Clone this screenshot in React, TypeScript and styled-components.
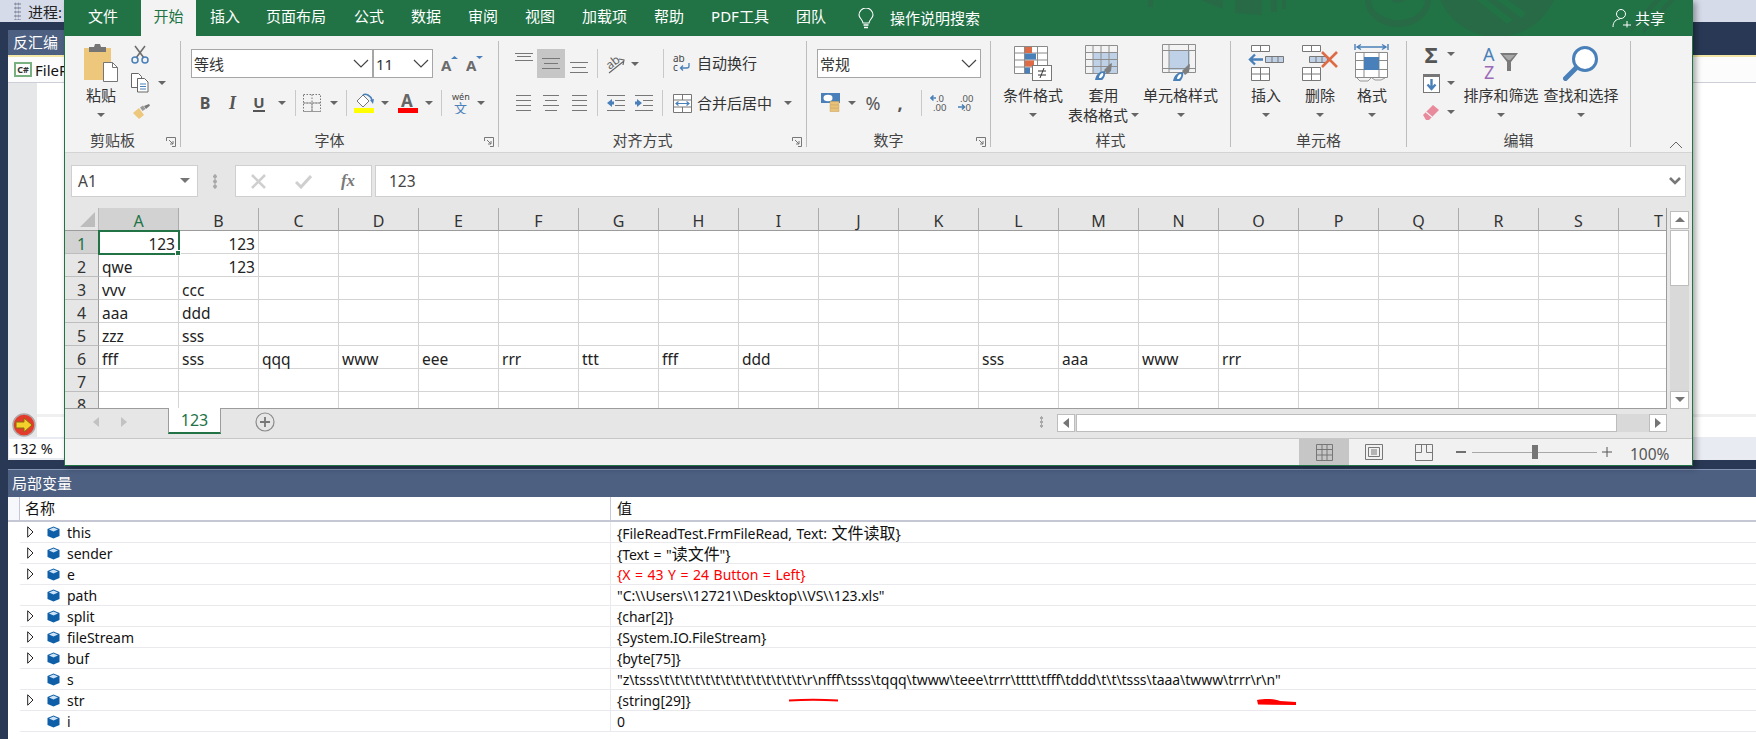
import React from "react";
import styled, { createGlobalStyle } from "styled-components";

const GlobalStyle = createGlobalStyle`
  html, body {
    margin: 0;
    padding: 0;
    background: #293955;
    font-family: "Noto Sans", "Noto Sans CJK SC", sans-serif;
  }
  * { box-sizing: border-box; }
`;

const CJK = `"Noto Sans", "Noto Sans CJK SC", sans-serif`;

const Page = styled.div`
  position: relative;
  width: 1756px;
  height: 739px;
  overflow: hidden;
  display: flex;
  flex-direction: column;
  background: #293955;
`;

/* ---------- visual studio behind ---------- */
const TopBar = styled.div`
  height: 22px;
  background: #d6dbe9;
  display: flex;
  align-items: center;
  padding-left: 14px;
  font-size: 15px;
  color: #222;
`;
const Grip = styled.div`
  width: 7px;
  height: 18px;
  margin-right: 7px;
  background-image: radial-gradient(#8a93a8 1px, transparent 1.2px);
  background-size: 3px 4px;
`;
const Workspace = styled.div`
  height: 438px;
  padding: 8px 0 0 8px;
  display: flex;
  flex-direction: column;
`;
const DocTab = styled.div`
  width: 56px;
  height: 25px;
  background: #4d6082;
  color: #fff;
  font-size: 15px;
  line-height: 25px;
  padding-left: 5px;
`;
const AccentLine = styled.div`
  height: 2px;
  background: #f3e6a6;
`;
const DocToolbar = styled.div`
  height: 26px;
  background: #fcfcfc;
  border-bottom: 1px solid #ccced8;
  display: flex;
  align-items: center;
  padding-left: 6px;
  gap: 3px;
  font-size: 15px;
  color: #111;
`;
const CsBadge = styled.div`
  width: 18px;
  height: 15px;
  border: 2px solid #79b07f;
  font-size: 9px;
  font-weight: 700;
  line-height: 11px;
  text-align: center;
  color: #333;
`;
const DocBody = styled.div`
  flex: 1;
  display: flex;
  min-height: 0;
`;
const Gutter = styled.div`
  width: 29px;
  background: #e6e7e8;
  display: flex;
  align-items: flex-end;
  justify-content: center;
  padding: 0 0 0 3px;
`;
const Editor = styled.div`
  flex: 1;
  display: flex;
  flex-direction: column;
  background: #fff;
`;
const EditorScroll = styled.div`
  height: 3px;
  margin-top: auto;
  margin-bottom: 20px;
  background: #f0f0f0;
`;
const DocStatus = styled.div`
  height: 23px;
  background: #e9ebf2;
  padding: 2px 0 2px 1px;
`;
const ZoomBox = styled.div`
  width: 60px;
  height: 19px;
  background: #fff;
  font-size: 14.5px;
  line-height: 19px;
  padding-left: 3px;
  color: #111;
`;

const Locals = styled.div`
  margin: 9px 0 0 8px;
  flex: 1;
  background: #fff;
  display: flex;
  flex-direction: column;
`;
const LocalsTitle = styled.div`
  height: 28px;
  background: #4d6082;
  border-top: 1px solid #8595b3;
  color: #fff;
  font-size: 15px;
  line-height: 27px;
  padding-left: 4px;
`;
const LocalsHead = styled.div`
  height: 25px;
  display: flex;
  border-bottom: 2px solid #c6c7d4;
  font-size: 15px;
  line-height: 23px;
  color: #111;
`;
const HeadGutter = styled.div`
  width: 12px;
  border-right: 1px solid #c6c7d4;
  background: #f7f8fb;
`;
const NameCol = styled.div`
  width: 591px;
  padding-left: 5px;
  border-right: 1px solid #c6c7d4;
`;
const ValueHead = styled.div`
  padding-left: 6px;
`;
const LocalRow = styled.div`
  height: 21px;
  margin-left: 12px;
  display: flex;
  border-bottom: 1px solid #e9e9ee;
  font-size: 14px;
  line-height: 22px;
  color: #111;
`;
const NameCell = styled.div`
  width: 591px;
  display: flex;
  align-items: center;
  padding-left: 7px;
  border-right: 1px solid #e9e9ee;
`;
const NameText = styled.span`
  padding-top: 2px;
`;
const ExpanderSlot = styled.div`
  width: 13px;
  display: flex;
  align-items: center;
`;
const CubeSlot = styled.div`
  width: 27px;
  padding-left: 7px;
  display: flex;
  align-items: center;
`;
const ValueCell = styled.div<{ $err?: boolean }>`
  padding-left: 6px;
  white-space: pre;
  letter-spacing: -0.05px;
  word-spacing: 1px;
  color: ${(p) => (p.$err ? "#ff0000" : "#111")};
`;
const WideRun = styled.span`
  font-size: 16px;
`;
const RedMarks = styled.svg`
  position: absolute;
  left: 780px;
  top: 692px;
`;

/* ---------- excel window ---------- */
const ExcelWindow = styled.div`
  position: absolute;
  left: 64px;
  top: 0;
  width: 1629px;
  height: 466px;
  border: 1px solid #217346;
  border-top: 0;
  background: #f3f3f3;
  box-shadow: 3px 2px 6px rgba(0, 0, 0, 0.35);
  display: flex;
  flex-direction: column;
`;
const TitleBar = styled.div`
  position: relative;
  height: 36px;
  background: #217346;
  display: flex;
  overflow: hidden;
  color: #fff;
  font-size: 15px;
  line-height: 33px;
`;
const Decor = styled.svg`
  position: absolute;
  left: 0;
  top: 0;
`;
const MenuTab = styled.div<{ $w: number; $on?: boolean }>`
  position: relative;
  width: ${(p) => p.$w}px;
  flex: none;
  text-align: center;
  white-space: nowrap;
  background: ${(p) => (p.$on ? "#f3f3f3" : "transparent")};
  color: ${(p) => (p.$on ? "#217346" : "#fff")};
`;
const TellMe = styled.div`
  position: relative;
  display: flex;
  align-items: center;
  gap: 16px;
  margin-left: 21px;
  width: 130px;
  white-space: nowrap;
`;
const ShareBox = styled.div`
  position: relative;
  margin-left: auto;
  margin-right: 27px;
  display: flex;
  align-items: center;
  gap: 4px;
`;
const Ribbon = styled.div`
  height: 117px;
  padding-top: 5px;
  display: flex;
  position: relative;
  border-bottom: 1px solid #d4d4d4;
  background: #f3f3f3;
`;
const Group = styled.div<{ $w: number }>`
  position: relative;
  flex: none;
  width: ${(p) => p.$w}px;
  height: 106px;
  border-right: 1px solid #bdbdbd;
  display: flex;
  flex-direction: column;
`;
const GroupBody = styled.div<{ $pad?: number }>`
  height: 89px;
  display: flex;
  padding-left: ${(p) => p.$pad ?? 0}px;
`;
const GroupLabel = styled.div<{ $launcher?: boolean }>`
  height: 17px;
  line-height: 20px;
  font-size: 15px;
  color: #444;
  text-align: center;
  padding-right: ${(p) => (p.$launcher ? 20 : 0)}px;
`;
const Launcher = styled.svg`
  position: absolute;
  right: 4px;
  bottom: 0;
`;
const BigButton = styled.div<{ $w: number }>`
  flex: none;
  width: ${(p) => p.$w}px;
  display: flex;
  flex-direction: column;
  align-items: center;
  font-size: 15px;
  line-height: 20px;
  color: #333;
`;
const BigIcon = styled.div`
  height: 44px;
  display: flex;
  align-items: center;
  justify-content: center;
`;
const BigLine = styled.div`
  height: 20px;
  display: flex;
  align-items: center;
  gap: 3px;
  white-space: nowrap;
`;
const SmallCol = styled.div<{ $pad?: number }>`
  flex: none;
  display: flex;
  flex-direction: column;
  gap: 3px;
  padding-left: ${(p) => p.$pad ?? 0}px;
`;
const SmallRow = styled.div`
  height: 26px;
  display: flex;
  align-items: center;
`;
const Stack = styled.div`
  flex: none;
  display: flex;
  flex-direction: column;
  gap: 12px;
  padding-top: 8px;
`;
const ToolRow = styled.div<{ $h: number }>`
  height: ${(p) => p.$h}px;
  display: flex;
  align-items: stretch;
`;
const Slot = styled.div<{ $w: number; $on?: boolean; $pt?: number; $pb?: number }>`
  flex: none;
  width: ${(p) => p.$w}px;
  display: flex;
  align-items: center;
  justify-content: center;
  padding-top: ${(p) => p.$pt ?? 0}px;
  padding-bottom: ${(p) => p.$pb ?? 0}px;
  background: ${(p) => (p.$on ? "#c6c6c6" : "transparent")};
`;
const VLine = styled.div`
  width: 1px;
  height: 100%;
  background: #c9c9c9;
`;
const Caret = styled.div`
  width: 0;
  height: 0;
  border-left: 4px solid transparent;
  border-right: 4px solid transparent;
  border-top: 4px solid #666;
`;
const Combo = styled.div<{ $w: number }>`
  flex: none;
  width: ${(p) => p.$w}px;
  height: 29px;
  background: #fff;
  border: 1px solid #a6a6a6;
  display: flex;
  align-items: center;
  justify-content: space-between;
  padding: 0 3px 0 2px;
  font-size: 15px;
  color: #333;
`;
const ToolText = styled.span<{ $bold?: boolean; $italic?: boolean; $size?: number; $line?: boolean }>`
  font-family: ${(p) => (p.$italic ? `"Liberation Serif", serif` : CJK)};
  font-weight: ${(p) => (p.$bold ? 700 : 400)};
  font-style: ${(p) => (p.$italic ? "italic" : "normal")};
  font-size: ${(p) => p.$size ?? 15}px;
  color: #555;
  line-height: 1;
  border-bottom: ${(p) => (p.$line ? "2px solid #555" : "0")};
`;
const RibbonText = styled.span<{ $lh: number }>`
  font-size: 15px;
  line-height: ${(p) => p.$lh}px;
  color: #333;
  white-space: nowrap;
`;
const Collapse = styled.svg`
  position: absolute;
  left: 1604px;
  top: 104px;
`;

const FormulaBar = styled.div`
  height: 55px;
  background: #e6e6e6;
  padding: 12px 6px 0 6px;
  display: flex;
  flex: none;
`;
const FieldBox = styled.div<{ $w?: number }>`
  height: 32px;
  background: #fff;
  border: 1px solid #cfcfcf;
  display: flex;
  align-items: center;
  font-size: 15.5px;
  color: #444;
  ${(p) => (p.$w ? `width: ${p.$w}px; flex: none;` : "flex: 1; margin-left: 3px;")}
`;
const NameValue = styled.span`
  flex: 1;
  padding-left: 6px;
`;
const Dots = styled.div`
  width: 37px;
  height: 32px;
  flex: none;
  display: flex;
  align-items: center;
  justify-content: center;
  padding-right: 3px;
`;
const DotsInner = styled.div`
  width: 4px;
  height: 15px;
  background-image: radial-gradient(#a9a9a9 1.6px, transparent 1.8px);
  background-size: 4px 5px;
`;
const FormulaText = styled.span`
  flex: 1;
  padding-left: 13px;
`;
const FxSlot = styled.div<{ $w: number }>`
  width: ${(p) => p.$w}px;
  display: flex;
  justify-content: center;
  align-items: center;
`;
const Fx = styled.span`
  font-family: "Liberation Serif", serif;
  font-style: italic;
  font-weight: 700;
  font-size: 17px;
  color: #7a7a7a;
`;

const MainArea = styled.div`
  flex: 1;
  display: flex;
  background: #e6e6e6;
  min-height: 0;
`;
const SheetArea = styled.div`
  width: 1602px;
  flex: none;
  display: flex;
  flex-direction: column;
`;
const GridFrame = styled.div`
  height: 201px;
  overflow: hidden;
  flex: none;
  border-right: 1px solid #9c9c9c;
  border-bottom: 1px solid #9c9c9c;
`;
const HeaderRow = styled.div`
  height: 23px;
  display: flex;
  background: #e6e6e6;
  border-bottom: 1px solid #9c9c9c;
`;
const Corner = styled.div`
  width: 34px;
  flex: none;
  border-right: 1px solid #b8b8b8;
  display: flex;
  align-items: flex-end;
  justify-content: flex-end;
  padding: 0 3px 3px 0;
`;
const ColHead = styled.div<{ $on?: boolean }>`
  width: 80px;
  flex: none;
  text-align: center;
  font-size: 16px;
  padding-top: 3px;
  line-height: 20px;
  color: ${(p) => (p.$on ? "#217346" : "#333")};
  background: ${(p) => (p.$on ? "#d2d2d2" : "transparent")};
  border-right: 1px solid #ababab;
`;
const SheetRow = styled.div`
  height: 23px;
  display: flex;
  background: #fff;
`;
const RowHead = styled.div<{ $on?: boolean }>`
  width: 34px;
  flex: none;
  text-align: center;
  font-size: 16px;
  padding-top: 3px;
  line-height: 20px;
  color: ${(p) => (p.$on ? "#217346" : "#333")};
  background: ${(p) => (p.$on ? "#d2d2d2" : "#e6e6e6")};
  border-right: 1px solid #9c9c9c;
  border-bottom: 1px solid #bdbdbd;
`;
const Cell = styled.div<{ $right?: boolean; $sel?: boolean }>`
  position: relative;
  width: 80px;
  flex: none;
  padding: 3px 3px 0;
  font-size: 15.5px;
  line-height: 20px;
  color: #222;
  white-space: nowrap;
  text-align: ${(p) => (p.$right ? "right" : "left")};
  border-right: 1px solid #d4d4d4;
  border-bottom: 1px solid #d4d4d4;
  ${(p) => p.$sel && "outline: 2px solid #217346; outline-offset: -1px; z-index: 1;"}
`;
const FillHandle = styled.div`
  position: absolute;
  right: -3px;
  bottom: -3px;
  width: 6px;
  height: 6px;
  background: #217346;
  border: 1px solid #fff;
`;
const VScroll = styled.div`
  width: 24px;
  height: 201px;
  padding: 3px 0 0 3px;
  display: flex;
  flex-direction: column;
`;
const ScrollBtn = styled.div<{ $w?: number }>`
  width: ${(p) => p.$w ?? 19}px;
  height: 18px;
  flex: none;
  background: #fff;
  border: 1px solid #bdbdbd;
  display: flex;
  align-items: center;
  justify-content: center;
`;
const VThumb = styled.div`
  width: 19px;
  height: 56px;
  margin-top: 1px;
  flex: none;
  background: #fff;
  border: 1px solid #bdbdbd;
`;
const VTrack = styled.div`
  width: 19px;
  flex: 1;
  background: #d9d9d9;
`;
const SheetBar = styled.div`
  height: 29px;
  flex: none;
  display: flex;
  align-items: flex-start;
`;
const NavArrows = styled.div`
  width: 103px;
  height: 25px;
  flex: none;
  display: flex;
  align-items: center;
  gap: 18px;
  padding-left: 26px;
`;
const SheetTab = styled.div`
  width: 53px;
  height: 26px;
  margin-top: -1px;
  background: #fff;
  border-left: 1px solid #9c9c9c;
  border-right: 1px solid #9c9c9c;
  border-bottom: 2px solid #217346;
  flex: none;
  text-align: center;
  font-size: 16px;
  line-height: 25px;
  color: #217346;
`;
const AddSheet = styled.div`
  width: 88px;
  height: 25px;
  flex: none;
  display: flex;
  align-items: center;
  justify-content: center;
`;
const HGrip = styled.div`
  width: 748px;
  height: 25px;
  flex: none;
  display: flex;
  align-items: center;
  justify-content: flex-end;
  padding-right: 14px;
`;
const HDots = styled.div`
  width: 3px;
  height: 12px;
  background-image: radial-gradient(#a9a9a9 1.2px, transparent 1.4px);
  background-size: 3px 4px;
`;
const HScroll = styled.div`
  flex: 1;
  display: flex;
  height: 18px;
  margin-top: 5px;
  background: #d9d9d9;
`;
const HThumb = styled.div`
  width: 541px;
  height: 18px;
  margin-left: 1px;
  background: #fff;
  border: 1px solid #bdbdbd;
  flex: none;
`;
const HSpace = styled.div`
  flex: 1;
`;
const StatusBar = styled.div`
  height: 27px;
  flex: none;
  background: #f1f1f1;
  border-top: 1px solid #c8c8c8;
  display: flex;
  align-items: stretch;
  justify-content: flex-end;
  padding-right: 22px;
`;
const ViewBtn = styled.div<{ $on?: boolean }>`
  width: 50px;
  flex: none;
  display: flex;
  align-items: center;
  justify-content: center;
  background: ${(p) => (p.$on ? "#c6c6c6" : "transparent")};
`;
const ZoomCtrl = styled.div`
  width: 181px;
  flex: none;
  display: flex;
  align-items: center;
  padding-left: 7px;
`;
const SliderTrack = styled.div`
  position: relative;
  width: 125px;
  height: 1px;
  margin: 0 5px 0 6px;
  background: #a8a8a8;
`;
const SliderThumb = styled.div`
  position: absolute;
  left: 60px;
  top: -7px;
  width: 6px;
  height: 14px;
  background: #757575;
`;
const ZoomPct = styled.div`
  font-size: 15.5px;
  line-height: 30px;
  color: #555;
  width: 40px;
`;

/* ---------- icons ---------- */
const BLUE = "#4a80b9";
const ORANGE = "#df6a46";

const Chevron = () => (
  <svg width="16" height="10" viewBox="0 0 16 10">
    <path d="M1 1l7 7 7-7" fill="none" stroke="#444" strokeWidth="1.2" />
  </svg>
);
const PasteIcon = () => (
  <svg width="36" height="40" viewBox="0 0 36 40">
    <rect x="1" y="5" width="27" height="32" fill="#edc77c" />
    <path d="M6 9V4h5l1-3h5l1 3h5v5z" fill="#757575" />
    <path d="M20.5 19.5h9l5 5v14h-14z" fill="#fff" stroke="#757575" />
    <path d="M29.5 19.5v5h5" fill="none" stroke="#757575" />
  </svg>
);
const ScissorsIcon = () => (
  <svg width="18" height="19" viewBox="0 0 18 19">
    <path d="M4 1l9 12M14 1L5 13" stroke="#6e6e6e" strokeWidth="1.6" fill="none" />
    <circle cx="4" cy="15" r="3" fill="none" stroke={BLUE} strokeWidth="1.5" />
    <circle cx="14" cy="15" r="3" fill="none" stroke={BLUE} strokeWidth="1.5" />
  </svg>
);
const CopyIcon = () => (
  <svg width="18" height="20" viewBox="0 0 18 20">
    <path d="M.5.5h7l3 3v11H.5z" fill="#fff" stroke="#666" />
    <path d="M6.5 5.5h7l3.5 3.5v10H6.5z" fill="#fff" stroke="#666" />
    <path d="M9 11h6M9 13.5h6M9 16h6" stroke={BLUE} />
  </svg>
);
const PainterIcon = () => (
  <svg width="19" height="16" viewBox="0 0 19 16">
    <path d="M1 9l6-5 5 7-5 4z" fill="#edc77c" />
    <path d="M8 3.5l3-2 2.5 3.5-3 2z" fill="#9a9a9a" />
    <path d="M12 2l5-2 1 1.500-4 3.500z" fill="#777" />
  </svg>
);
const GrowA = ({ down }: { down?: boolean }) => (
  <svg width="18" height="18" viewBox="0 0 18 18">
    <text x="0" y="16" fontSize="15" fontWeight="700" fill="#6a6a6a" fontFamily="Noto Sans">A</text>
    <path d={down ? "M10 1h7l-3.500 3z" : "M10 4l3.500-3L17 4z"} fill={BLUE} />
  </svg>
);
const BorderIcon = () => (
  <svg width="18" height="18" viewBox="0 0 18 18">
    <path d="M.5.5h17v17H.5zM9 .5v17M.5 9h17" fill="none" stroke="#777" strokeDasharray="1.500 1.500" />
    <path d="M.5 17.500h17M9 9v8M.5 9h17" stroke="#999" fill="none" />
  </svg>
);
const FillColorIcon = () => (
  <svg width="21" height="20" viewBox="0 0 21 20">
    <path d="M3 8l6-6 6 6-6 6z" fill="#fff" stroke="#777" />
    <path d="M9 2c3-2 8 1 9 5" fill="none" stroke={BLUE} strokeWidth="1.600" />
    <path d="M16 7l3 4 1-5z" fill={BLUE} />
    <rect x="0" y="15" width="20" height="5" fill="#ffff00" />
  </svg>
);
const FontColorIcon = () => (
  <svg width="21" height="20" viewBox="0 0 21 20">
    <text x="3" y="14" fontSize="17" fontWeight="700" fill="#666" fontFamily="Noto Sans">A</text>
    <rect x="0" y="15" width="20" height="5" fill="#ff0000" />
  </svg>
);
const WenIcon = () => (
  <svg width="22" height="22" viewBox="0 0 22 22">
    <text x="1" y="8" fontSize="9" fill="#444" fontFamily="Noto Sans">wén</text>
    <text x="3" y="21" fontSize="13" fill={BLUE} fontFamily="Noto Sans CJK SC">文</text>
  </svg>
);
const Lines = ({ w, rows }: { w: number; rows: [number, number][] }) => (
  <svg width={w} height={rows[rows.length - 1][0] + 1} viewBox={`0 0 ${w} ${rows[rows.length - 1][0] + 1}`}>
    {rows.map(([y, x], i) => (
      <path key={i} d={`M${x} ${y + 0.5}H${w - x}`} stroke="#777" />
    ))}
  </svg>
);
const OrientIcon = () => (
  <svg width="20" height="20" viewBox="0 0 20 20">
    <g transform="rotate(-38 8 10)">
      <text x="1" y="12" fontSize="12" fill="#666" fontFamily="Noto Sans">ab</text>
    </g>
    <path d="M3 19L18 7M13 5l5 1-1 5" fill="none" stroke="#666" strokeWidth="1.200" />
  </svg>
);
const WrapIcon = () => (
  <svg width="18" height="17" viewBox="0 0 18 17">
    <text x="0" y="7" fontSize="10" fill="#444" fontFamily="Noto Sans">ab</text>
    <text x="0" y="16" fontSize="10" fill="#444" fontFamily="Noto Sans">c</text>
    <path d="M16 8v3a2 2 0 0 1-2 2H8M10 10.500L7.500 13l2.500 2.500" fill="none" stroke={BLUE} strokeWidth="1.300" />
  </svg>
);
const IndentIcon = ({ rev }: { rev?: boolean }) => (
  <svg width="18" height="16" viewBox="0 0 18 16">
    <path d="M0 .5h18M8 5.500h10M8 10.500h10M0 15.500h18" stroke="#777" />
    <path d={rev ? "M0 8l5-4v2.500h2v3H5V12z" : "M7 8L2 4v2.500H0v3h2V12z"} fill={BLUE} />
  </svg>
);
const MergeIcon = () => (
  <svg width="19" height="19" viewBox="0 0 19 19">
    <path d="M.5.5h18v18H.5zM.5 6h18M.5 13h18M9.500.5V6M9.500 13v5.500" fill="#fff" stroke="#777" />
    <path d="M3 9.500h13M5.500 7.500l-2.500 2 2.500 2M13.500 7.500l2.500 2-2.500 2" fill="none" stroke={BLUE} strokeWidth="1.200" />
  </svg>
);
const CurrencyIcon = () => (
  <svg width="20" height="20" viewBox="0 0 20 20">
    <rect x="0" y="0" width="19" height="10" fill={BLUE} />
    <ellipse cx="7" cy="5" rx="4.500" ry="3.200" fill="#fff" />
    <path d="M9 8.500h9v3H9zM9 12h9v3H9zM9 15.500h9v3H9z" fill="#e9c27a" stroke="#c9a050" strokeWidth=".5" />
  </svg>
);
const DecimalIcon = ({ more }: { more?: boolean }) => (
  <svg width="18" height="19" viewBox="0 0 18 19">
    <text x={more ? 6 : 3} y="8" fontSize="9.500" fill="#555" fontFamily="Noto Sans">{more ? ".0" : ".00"}</text>
    <text x={more ? 3 : 6} y="17" fontSize="9.500" fill="#555" fontFamily="Noto Sans">{more ? ".00" : ".0"}</text>
    <path d={more ? "M6 4H1.500M3.500 1.500L1 4l2.500 2.500" : "M7 13H1M5 10.500L7.500 13 5 15.500"} fill="none" stroke={BLUE} strokeWidth="1.600" />
  </svg>
);
const Brush = ({ x, y }: { x: number; y: number }) => (
  <g transform={`translate(${x} ${y})`}>
    <path d="M0 17c1-6 5-9 10-9 1 3-1 8-3 9z" fill={BLUE} />
    <path d="M4 15c0-3 2-5 4-5 1 2-1 4-2 5z" fill="#fff" />
    <path d="M9 7l6-6 2-1-1 8-4 3z" fill="#7f7f7f" />
  </g>
);
const CondFormatIcon = () => (
  <svg width="38" height="35" viewBox="0 0 38 35">
    <path d="M.5.500h33v27H.5zM10.500.500v27M23.500.500v27M.5 7h33M.5 14h33M.5 21h33" fill="#fff" stroke="#8a8a8a" />
    <rect x="11" y="1" width="7" height="6" fill={ORANGE} />
    <rect x="11" y="7.500" width="11" height="6" fill={BLUE} />
    <rect x="11" y="14.500" width="9" height="6" fill={ORANGE} />
    <rect x="11" y="21.500" width="5" height="6" fill={BLUE} />
    <rect x="18.500" y="19.500" width="19" height="15" fill="#fff" stroke="#777" />
    <path d="M24 25h8M24 29h8M30 22l-4 10" stroke="#333" fill="none" />
  </svg>
);
const TableStyleIcon = () => (
  <svg width="38" height="36" viewBox="0 0 38 36">
    <rect x="8" y="8" width="24" height="21" fill="#bfd1e6" />
    <path d="M.5.500h32v28H.5zM.5 7.500h32M.5 14.500h32M.5 21.500h32M8 .5v28M16 .5v28M24 .5v28" fill="none" stroke="#8e8e8e" />
    <Brush x={10} y={18} />
  </svg>
);
const CellStyleIcon = () => (
  <svg width="38" height="38" viewBox="0 0 38 38">
    <rect x="7" y="6" width="21" height="20" fill="#bfd1e6" />
    <path d="M.5.500h33v28H.5zM.5 6.500h33M.5 24.500h33M7 .5v28M26.500.5v28" fill="none" stroke="#8e8e8e" />
    <Brush x={11} y={20} />
  </svg>
);
const InsertIcon = () => (
  <svg width="36" height="36" viewBox="0 0 36 36">
    <path d="M3.500.5h18v6h-18zM12.500.5v6M3.500 22.500h18v13h-18zM3.500 29h18M12.500 22.500v13" fill="#fff" stroke="#777" />
    <path d="M17.500 11.500h18v6h-18zM24 11.500v6M30 11.500v6" fill="#bfd1e6" stroke="#777" />
    <path d="M15 14.500H2M7 9.500l-5 5 5 5" fill="none" stroke={BLUE} strokeWidth="2.400" />
  </svg>
);
const DeleteIcon = () => (
  <svg width="36" height="36" viewBox="0 0 36 36">
    <path d="M.5.5h18v6H.5zM9.500.5v6M.5 22.500h18v13H.5zM.5 29h18M9.500 22.500v13" fill="#fff" stroke="#777" />
    <path d="M7.500 11.500h18v6h-18zM14 11.500v6M20 11.500v6" fill="#bfd1e6" stroke="#777" />
    <path d="M20 7l15 15M35 7L20 22" fill="none" stroke={ORANGE} strokeWidth="2.600" />
  </svg>
);
const FormatIcon = () => (
  <svg width="36" height="40" viewBox="0 0 36 40">
    <path d="M1 1v6M34 1v6M3 4h29M7 1.500L3 4l4 2.500M28 1.500L32 4l-4 2.500" fill="none" stroke={BLUE} strokeWidth="1.400" />
    <path d="M1.500 9.500h32v25H1.500zM1.500 17.500h32M1.500 26.500h32M10 9.500v25M25 9.500v25" fill="#fff" stroke="#8a8a8a" />
    <rect x="10" y="14" width="15" height="13" fill={BLUE} />
    <path d="M3 35l3 3h8l3-3M18 35l3 2h6l4-2" fill="none" stroke="#999" />
  </svg>
);
const FillDownIcon = () => (
  <svg width="17" height="19" viewBox="0 0 17 19">
    <rect x=".5" y=".5" width="16" height="18" fill="#fff" stroke="#777" />
    <rect x="0" y="0" width="17" height="3" fill="#777" />
    <path d="M8.500 5v10M4.500 10.500l4 4.500 4-4.500" fill="none" stroke={BLUE} strokeWidth="2.400" />
  </svg>
);
const EraserIcon = () => (
  <svg width="18" height="16" viewBox="0 0 18 16">
    <path d="M1 11l10-10 6 5-10 10H4z" fill="#e98a9c" />
    <path d="M4 8l6 5" stroke="#f3f3f3" strokeWidth="1.200" />
  </svg>
);
const SortIcon = () => (
  <svg width="36" height="36" viewBox="0 0 36 36">
    <text x="0" y="16" fontSize="18" fontWeight="400" fill={BLUE} fontFamily="Noto Sans">A</text>
    <text x="1" y="34" fontSize="18" fontWeight="400" fill="#9b6bb8" fontFamily="Noto Sans">Z</text>
    <path d="M17 8h18l-7 9v9h-4v-9z" fill="#7a7a7a" />
    <path d="M20 10h12l-5 5h-2z" fill="#a8a8a8" />
  </svg>
);
const FindIcon = () => (
  <svg width="36" height="36" viewBox="0 0 36 36">
    <circle cx="22" cy="14" r="11.500" fill="#fff" stroke={BLUE} strokeWidth="3" />
    <path d="M13 23L2.500 33.500" stroke={BLUE} strokeWidth="5" strokeLinecap="round" />
  </svg>
);
const Bulb = () => (
  <svg width="16" height="21" viewBox="0 0 16 21">
    <path d="M5 15c0-3-4-5-4-8a7 7 0 0 1 14 0c0 3-4 5-4 8z" fill="none" stroke="#fff" strokeWidth="1.100" />
    <path d="M5.500 17h5M6 19.500h4" stroke="#fff" strokeWidth="1.300" />
  </svg>
);
const PersonIcon = () => (
  <svg width="19" height="20" viewBox="0 0 19 20">
    <circle cx="9" cy="6" r="4.500" fill="none" stroke="#fff" />
    <path d="M1 19c0-5 3-8 7-8M11 17h8M15 13v6.500" fill="none" stroke="#fff" />
  </svg>
);
const LauncherIcon = () => (
  <Launcher width="10" height="10" viewBox="0 0 10 10">
    <path d="M.5 4V.5H9.500V9.500H6M3 3l4 4M7 4v3H4" fill="none" stroke="#777" />
  </Launcher>
);
const Tri = ({ dir, color = "#757575" }: { dir: "up" | "down" | "left" | "right"; color?: string }) => {
  const d = { up: "M0 7L5 2l5 5z", down: "M0 2h10L5 7z", left: "M8 0v10L2 5z", right: "M2 0v10l6-5z" }[dir];
  return (
    <svg width="10" height="10" viewBox="0 0 10 10">
      <path d={d} fill={color} />
    </svg>
  );
};
const Expander = () => (
  <svg width="7" height="12" viewBox="0 0 7 12">
    <path d="M.7.8v10.400L6 6z" fill="#fff" stroke="#222" strokeWidth="1" />
  </svg>
);
const Cube = () => (
  <svg width="13" height="13" viewBox="0 0 13 13">
    <path d="M6.500.500l6 2.500v7l-6 2.500-6-2.500V3z" fill="#0f5fa8" />
    <path d="M6.500 1.500l4.500 2-4.500 2-4.500-2z" fill="#cfe3f5" />
  </svg>
);
const GoArrow = () => (
  <svg width="24" height="24" viewBox="0 0 24 24">
    <circle cx="12" cy="12" r="11" fill="#e33c2c" stroke="#b0a8a8" strokeWidth="1.500" />
    <path d="M4 9h8V5l8 7-8 7v-4H4z" fill="#f4d02a" stroke="#8a6a10" strokeWidth="1" />
  </svg>
);

/* ---------- data ---------- */
const menu: [string, number][] = [
  ["文件", 76], ["开始", 55], ["插入", 58], ["页面布局", 84], ["公式", 62], ["数据", 52], ["审阅", 62],
  ["视图", 52], ["加载项", 77], ["帮助", 52], ["PDF工具", 90], ["团队", 52],
];
const columns = "ABCDEFGHIJKLMNOPQRST".split("");
const rows: Record<number, string>[] = [
  { 0: "123", 1: "123" },
  { 0: "qwe", 1: "123" },
  { 0: "vvv", 1: "ccc" },
  { 0: "aaa", 1: "ddd" },
  { 0: "zzz", 1: "sss" },
  { 0: "fff", 1: "sss", 2: "qqq", 3: "www", 4: "eee", 5: "rrr", 6: "ttt", 7: "fff", 8: "ddd", 11: "sss", 12: "aaa", 13: "www", 14: "rrr" },
  {},
  {},
];
const locals: { name: string; open?: boolean; err?: boolean; value: React.ReactNode }[] = [
  { name: "this", open: true, value: <>{"{FileReadTest.FrmFileRead, Text: "}<WideRun>文件读取</WideRun>{"}"}</> },
  { name: "sender", open: true, value: <>{'{Text = "'}<WideRun>读文件</WideRun>{'"}'}</> },
  { name: "e", open: true, value: "{X = 43 Y = 24 Button = Left}", err: true },
  { name: "path", value: String.raw`"C:\\Users\\12721\\Desktop\\VS\\123.xls"` },
  { name: "split", open: true, value: "{char[2]}" },
  { name: "fileStream", open: true, value: "{System.IO.FileStream}" },
  { name: "buf", open: true, value: "{byte[75]}" },
  { name: "s", value: String.raw`"z\tsss\t\t\t\t\t\t\t\t\t\t\t\t\t\t\r\nfff\tsss\tqqq\twww\teee\trrr\tttt\tfff\tddd\t\t\tsss\taaa\twww\trrr\r\n"` },
  { name: "str", open: true, value: "{string[29]}" },
  { name: "i", value: "0" },
];

const App = () => (
  <Page>
    <GlobalStyle />
    <TopBar>
      <Grip />
      进程:
    </TopBar>
    <Workspace>
      <DocTab>反汇编</DocTab>
      <AccentLine />
      <DocToolbar>
        <CsBadge>C#</CsBadge>
        FileR
      </DocToolbar>
      <DocBody>
        <Gutter>
          <GoArrow />
        </Gutter>
        <Editor>
          <EditorScroll />
        </Editor>
      </DocBody>
      <DocStatus>
        <ZoomBox>132 %</ZoomBox>
      </DocStatus>
    </Workspace>

    <Locals>
      <LocalsTitle>局部变量</LocalsTitle>
      <LocalsHead>
        <HeadGutter />
        <NameCol>名称</NameCol>
        <ValueHead>值</ValueHead>
      </LocalsHead>
      {locals.map((l) => (
        <LocalRow key={l.name}>
          <NameCell>
            <ExpanderSlot>{l.open && <Expander />}</ExpanderSlot>
            <CubeSlot>
              <Cube />
            </CubeSlot>
            <NameText>{l.name}</NameText>
          </NameCell>
          <ValueCell $err={l.err}>{l.value}</ValueCell>
        </LocalRow>
      ))}
    </Locals>

    <RedMarks width="530" height="20" viewBox="0 0 530 20">
      <path d="M9 8.500c16-1 32-1 49 0" stroke="#ff0000" strokeWidth="2.200" fill="none" />
      <path d="M477 8c10-2 18-1 23 1l16 1v3l-38-.500z" fill="#ff0000" />
    </RedMarks>

    <ExcelWindow>
      <TitleBar>
        <Decor width="1627" height="36" viewBox="0 0 1627 36">
          <g fill="#276a45">
            <path d="M1083 0h5v7h-5zM1136 0h22v9zM1170 0h27v15l-27 -2zM1206 0h6v12h-6zM1217 0h4v9h-4z" />
            <path d="M1300 0a33 27 0 0 0 66 0h-6a27 20 0 0 1-54 0z" />
            <path d="M1326 0a8 5 0 0 0 14 0z" />
            <circle cx="1432" cy="-25" r="62" />
            <path d="M1566 26l24-26h6l-30 32zM1578 28l26-28h6l-32 34z" />
          </g>
          <path d="M1412 0l30 24 6-4-26-20zM1432 0l24 18 5-5-18-13z" fill="#217346" />
        </Decor>
        {menu.map(([t, w]) => (
          <MenuTab key={t} $w={w} $on={t === "开始"}>
            {t}
          </MenuTab>
        ))}
        <TellMe>
          <Bulb />
          操作说明搜索
        </TellMe>
        <ShareBox>
          <PersonIcon />
          共享
        </ShareBox>
      </TitleBar>

      <Ribbon>
        <Group $w={116}>
          <GroupBody $pad={6}>
            <BigButton $w={60}>
              <BigIcon>
                <PasteIcon />
              </BigIcon>
              <BigLine>粘贴</BigLine>
              <BigLine>
                <Caret />
              </BigLine>
            </BigButton>
            <SmallCol>
              <SmallRow>
                <Slot $w={18}>
                  <ScissorsIcon />
                </Slot>
              </SmallRow>
              <SmallRow>
                <Slot $w={18}>
                  <CopyIcon />
                </Slot>
                <Slot $w={26}>
                  <Caret />
                </Slot>
              </SmallRow>
              <SmallRow>
                <Slot $w={20}>
                  <PainterIcon />
                </Slot>
              </SmallRow>
            </SmallCol>
          </GroupBody>
          <GroupLabel $launcher>剪贴板</GroupLabel>
          <LauncherIcon />
        </Group>

        <Group $w={318}>
          <GroupBody $pad={10}>
            <Stack>
              <ToolRow $h={29}>
                <Combo $w={182}>
                  等线
                  <Chevron />
                </Combo>
                <Combo $w={60}>
                  11
                  <Chevron />
                </Combo>
                <Slot $w={33}>
                  <GrowA />
                </Slot>
                <Slot $w={18}>
                  <GrowA down />
                </Slot>
              </ToolRow>
              <ToolRow $h={26}>
                <Slot $w={28}>
                  <ToolText $bold $size={16}>B</ToolText>
                </Slot>
                <Slot $w={27}>
                  <ToolText $bold $italic $size={18}>I</ToolText>
                </Slot>
                <Slot $w={26}>
                  <ToolText $bold $size={15} $line>U</ToolText>
                </Slot>
                <Slot $w={20}>
                  <Caret />
                </Slot>
                <Slot $w={6}>
                  <VLine />
                </Slot>
                <Slot $w={28}>
                  <BorderIcon />
                </Slot>
                <Slot $w={16}>
                  <Caret />
                </Slot>
                <Slot $w={8}>
                  <VLine />
                </Slot>
                <Slot $w={28}>
                  <FillColorIcon />
                </Slot>
                <Slot $w={14}>
                  <Caret />
                </Slot>
                <Slot $w={32}>
                  <FontColorIcon />
                </Slot>
                <Slot $w={10}>
                  <Caret />
                </Slot>
                <Slot $w={14}>
                  <VLine />
                </Slot>
                <Slot $w={28}>
                  <WenIcon />
                </Slot>
                <Slot $w={10}>
                  <Caret />
                </Slot>
              </ToolRow>
            </Stack>
          </GroupBody>
          <GroupLabel $launcher>字体</GroupLabel>
          <LauncherIcon />
        </Group>

        <Group $w={308}>
          <GroupBody $pad={11}>
            <Stack>
              <ToolRow $h={29}>
                <Slot $w={27} $pb={13}>
                  <Lines w={18} rows={[[0, 0], [3, 2], [7, 0]]} />
                </Slot>
                <Slot $w={28} $on>
                  <Lines w={18} rows={[[0, 0], [5, 2], [10, 0]]} />
                </Slot>
                <Slot $w={28} $pt={7}>
                  <Lines w={18} rows={[[0, 0], [5, 2], [10, 0]]} />
                </Slot>
                <Slot $w={8}>
                  <VLine />
                </Slot>
                <Slot $w={30}>
                  <OrientIcon />
                </Slot>
                <Slot $w={8}>
                  <Caret />
                </Slot>
                <Slot $w={20} />
                <Slot $w={8}>
                  <VLine />
                </Slot>
                <Slot $w={30}>
                  <WrapIcon />
                </Slot>
                <RibbonText $lh={29}>自动换行</RibbonText>
              </ToolRow>
              <ToolRow $h={26}>
                <Slot $w={27}>
                  <Lines w={15} rows={[[0, 0], [5, 0], [10, 0], [15, 0]]} />
                </Slot>
                <Slot $w={28}>
                  <Lines w={16} rows={[[0, 0], [5, 2], [10, 0], [15, 2]]} />
                </Slot>
                <Slot $w={28}>
                  <Lines w={15} rows={[[0, 0], [5, 0], [10, 0], [15, 0]]} />
                </Slot>
                <Slot $w={8}>
                  <VLine />
                </Slot>
                <Slot $w={30}>
                  <IndentIcon rev />
                </Slot>
                <Slot $w={26}>
                  <IndentIcon />
                </Slot>
                <Slot $w={10}>
                  <VLine />
                </Slot>
                <Slot $w={30}>
                  <MergeIcon />
                </Slot>
                <RibbonText $lh={26}>合并后居中</RibbonText>
                <Slot $w={32}>
                  <Caret />
                </Slot>
              </ToolRow>
            </Stack>
          </GroupBody>
          <GroupLabel $launcher>对齐方式</GroupLabel>
          <LauncherIcon />
        </Group>

        <Group $w={184}>
          <GroupBody $pad={10}>
            <Stack>
              <ToolRow $h={29}>
                <Combo $w={164}>
                  常规
                  <Chevron />
                </Combo>
              </ToolRow>
              <ToolRow $h={26}>
                <Slot $w={28}>
                  <CurrencyIcon />
                </Slot>
                <Slot $w={14}>
                  <Caret />
                </Slot>
                <Slot $w={28}>
                  <ToolText $size={18}>%</ToolText>
                </Slot>
                <Slot $w={26}>
                  <ToolText $bold $size={18}>,</ToolText>
                </Slot>
                <Slot $w={16}>
                  <VLine />
                </Slot>
                <Slot $w={20}>
                  <DecimalIcon more />
                </Slot>
                <Slot $w={34}>
                  <DecimalIcon />
                </Slot>
              </ToolRow>
            </Stack>
          </GroupBody>
          <GroupLabel $launcher>数字</GroupLabel>
          <LauncherIcon />
        </Group>

        <Group $w={240}>
          <GroupBody $pad={9}>
            <BigButton $w={66}>
              <BigIcon>
                <CondFormatIcon />
              </BigIcon>
              <BigLine>条件格式</BigLine>
              <BigLine>
                <Caret />
              </BigLine>
            </BigButton>
            <BigButton $w={75}>
              <BigIcon>
                <TableStyleIcon />
              </BigIcon>
              <BigLine>套用</BigLine>
              <BigLine>
                表格格式
                <Caret />
              </BigLine>
            </BigButton>
            <BigButton $w={79}>
              <BigIcon>
                <CellStyleIcon />
              </BigIcon>
              <BigLine>单元格样式</BigLine>
              <BigLine>
                <Caret />
              </BigLine>
            </BigButton>
          </GroupBody>
          <GroupLabel>样式</GroupLabel>
        </Group>

        <Group $w={176}>
          <GroupBody $pad={8}>
            <BigButton $w={54}>
              <BigIcon>
                <InsertIcon />
              </BigIcon>
              <BigLine>插入</BigLine>
              <BigLine>
                <Caret />
              </BigLine>
            </BigButton>
            <BigButton $w={54}>
              <BigIcon>
                <DeleteIcon />
              </BigIcon>
              <BigLine>删除</BigLine>
              <BigLine>
                <Caret />
              </BigLine>
            </BigButton>
            <BigButton $w={50}>
              <BigIcon>
                <FormatIcon />
              </BigIcon>
              <BigLine>格式</BigLine>
              <BigLine>
                <Caret />
              </BigLine>
            </BigButton>
          </GroupBody>
          <GroupLabel>单元格</GroupLabel>
        </Group>

        <Group $w={224}>
          <GroupBody>
            <SmallCol $pad={14}>
              <SmallRow>
                <Slot $w={20}>
                  <ToolText $bold $size={22}>Σ</ToolText>
                </Slot>
                <Slot $w={20}>
                  <Caret />
                </Slot>
              </SmallRow>
              <SmallRow>
                <Slot $w={20}>
                  <FillDownIcon />
                </Slot>
                <Slot $w={20}>
                  <Caret />
                </Slot>
              </SmallRow>
              <SmallRow>
                <Slot $w={20}>
                  <EraserIcon />
                </Slot>
                <Slot $w={20}>
                  <Caret />
                </Slot>
              </SmallRow>
            </SmallCol>
            <BigButton $w={80}>
              <BigIcon>
                <SortIcon />
              </BigIcon>
              <BigLine>排序和筛选</BigLine>
              <BigLine>
                <Caret />
              </BigLine>
            </BigButton>
            <BigButton $w={80}>
              <BigIcon>
                <FindIcon />
              </BigIcon>
              <BigLine>查找和选择</BigLine>
              <BigLine>
                <Caret />
              </BigLine>
            </BigButton>
          </GroupBody>
          <GroupLabel>编辑</GroupLabel>
        </Group>
        <Collapse width="14" height="9" viewBox="0 0 14 9">
          <path d="M1 8l6-6 6 6" fill="none" stroke="#666" />
        </Collapse>
      </Ribbon>

      <FormulaBar>
        <FieldBox $w={127}>
          <NameValue>A1</NameValue>
          <Slot $w={24}>
            <Tri dir="down" />
          </Slot>
        </FieldBox>
        <Dots>
          <DotsInner />
        </Dots>
        <FieldBox $w={137}>
          <FxSlot $w={44}>
            <svg width="15" height="15" viewBox="0 0 15 15">
              <path d="M1 1l13 13M14 1L1 14" stroke="#cfcfcf" strokeWidth="2.500" />
            </svg>
          </FxSlot>
          <FxSlot $w={46}>
            <svg width="17" height="15" viewBox="0 0 17 15">
              <path d="M1 8l5 5L16 2" fill="none" stroke="#cfcfcf" strokeWidth="3" />
            </svg>
          </FxSlot>
          <FxSlot $w={44}>
            <Fx>fx</Fx>
          </FxSlot>
        </FieldBox>
        <FieldBox>
          <FormulaText>123</FormulaText>
          <Slot $w={20}>
            <svg width="12" height="9" viewBox="0 0 12 9">
              <path d="M1 1l5 5 5-5" fill="none" stroke="#777" strokeWidth="2.600" />
            </svg>
          </Slot>
        </FieldBox>
      </FormulaBar>

      <MainArea>
        <SheetArea>
          <GridFrame>
            <HeaderRow>
              <Corner>
                <svg width="15" height="15" viewBox="0 0 15 15">
                  <path d="M15 0v15H0z" fill="#bdbdbd" />
                </svg>
              </Corner>
              {columns.map((c) => (
                <ColHead key={c} $on={c === "A"}>
                  {c}
                </ColHead>
              ))}
            </HeaderRow>
            {rows.map((r, i) => (
              <SheetRow key={i}>
                <RowHead $on={i === 0}>{i + 1}</RowHead>
                {columns.map((c, j) => (
                  <Cell key={c} $right={i < 2 && r[j] === "123"} $sel={i === 0 && j === 0}>
                    {r[j]}
                    {i === 0 && j === 0 && <FillHandle />}
                  </Cell>
                ))}
              </SheetRow>
            ))}
          </GridFrame>
          <SheetBar>
            <NavArrows>
              <Tri dir="left" color="#c2c2c2" />
              <Tri dir="right" color="#c2c2c2" />
            </NavArrows>
            <SheetTab>123</SheetTab>
            <AddSheet>
              <svg width="20" height="20" viewBox="0 0 20 20">
                <circle cx="10" cy="10" r="9" fill="none" stroke="#8a8a8a" strokeWidth="1.200" />
                <path d="M10 5v10M5 10h10" stroke="#777" strokeWidth="1.800" />
              </svg>
            </AddSheet>
            <HGrip>
              <HDots />
            </HGrip>
            <HScroll>
              <ScrollBtn $w={18}>
                <Tri dir="left" />
              </ScrollBtn>
              <HThumb />
              <HSpace />
              <ScrollBtn $w={18}>
                <Tri dir="right" />
              </ScrollBtn>
            </HScroll>
          </SheetBar>
        </SheetArea>
        <VScroll>
          <ScrollBtn>
            <Tri dir="up" />
          </ScrollBtn>
          <VThumb />
          <VTrack />
          <ScrollBtn>
            <Tri dir="down" />
          </ScrollBtn>
        </VScroll>
      </MainArea>

      <StatusBar>
        <ViewBtn $on>
          <svg width="17" height="17" viewBox="0 0 17 17">
            <path d="M.5.5h16v16H.5zM.5 5.500h16M.5 11h16M6 .5v16M11 .5v16" fill="none" stroke="#777" />
          </svg>
        </ViewBtn>
        <ViewBtn>
          <svg width="18" height="16" viewBox="0 0 18 16">
            <path d="M.5.5h17v15H.5z M3.500 3.500h11v9h-11z" fill="none" stroke="#777" />
            <path d="M6 6h6M6 8h6M6 10h6" stroke="#777" />
          </svg>
        </ViewBtn>
        <ViewBtn>
          <svg width="18" height="17" viewBox="0 0 18 17">
            <path d="M.5.5h17v16H.5zM6.500.5v8h-6M11.500.5v8h6" fill="none" stroke="#777" />
          </svg>
        </ViewBtn>
        <ZoomCtrl>
          <svg width="10" height="10" viewBox="0 0 10 10">
            <path d="M0 5h10" stroke="#444" strokeWidth="1.500" />
          </svg>
          <SliderTrack>
            <SliderThumb />
          </SliderTrack>
          <svg width="10" height="10" viewBox="0 0 10 10">
            <path d="M0 5h10M5 0v10" stroke="#555" />
          </svg>
        </ZoomCtrl>
        <ZoomPct>100%</ZoomPct>
      </StatusBar>
    </ExcelWindow>
  </Page>
);

export default App;
